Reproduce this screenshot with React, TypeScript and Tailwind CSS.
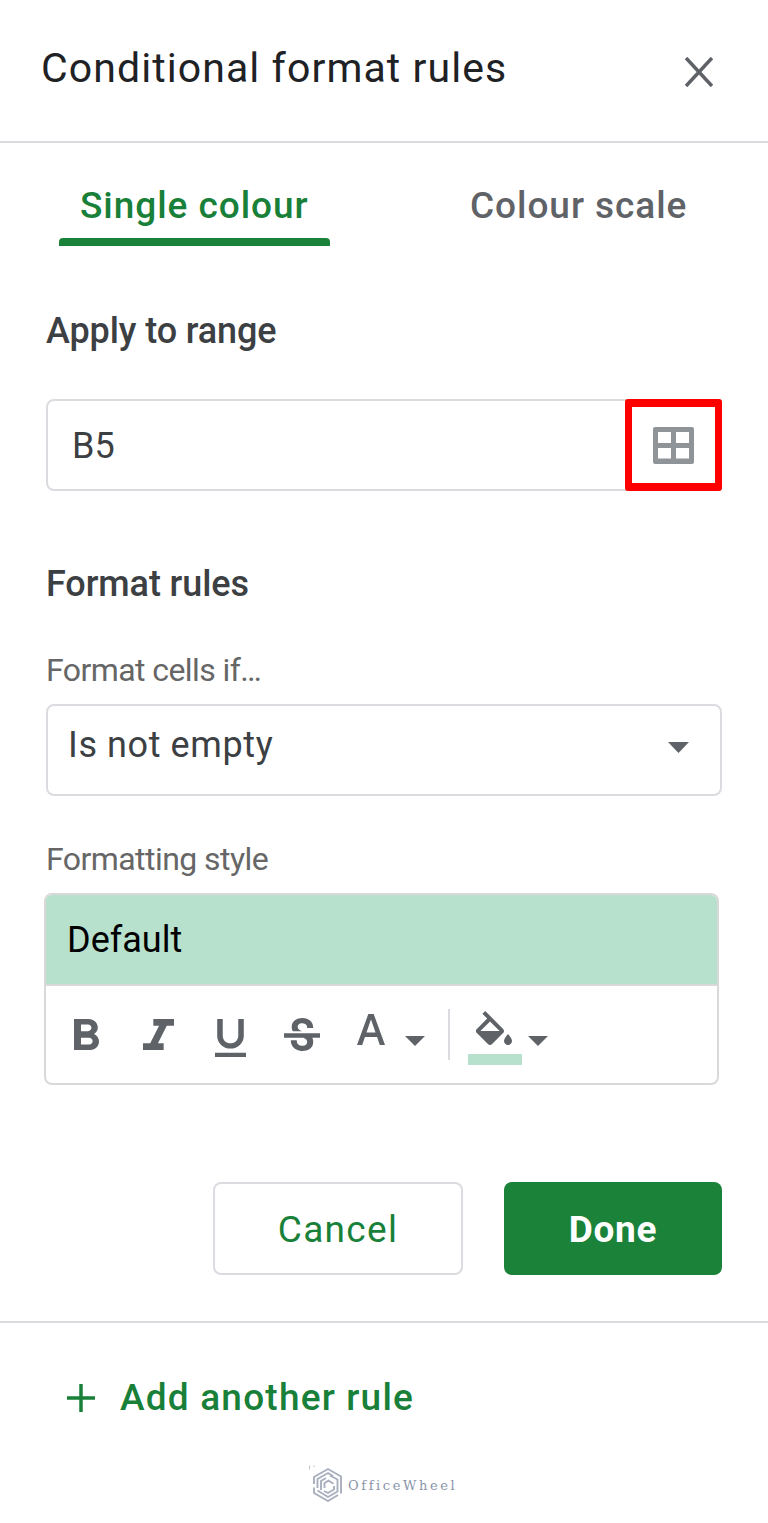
import {
  MdFormatBold,
  MdFormatColorFill,
  MdFormatColorText,
  MdFormatItalic,
  MdFormatUnderlined,
  MdStrikethroughS,
} from "react-icons/md";

const Caret = ({ className = "" }: { className?: string }) => (
  <svg
    viewBox="0 0 20 10"
    preserveAspectRatio="none"
    className={`shrink-0 fill-[#5f6368] ${className}`}
  >
    <path d="M0 0h20L10 10z" />
  </svg>
);

const GridIcon = () => (
  <svg viewBox="0 0 41 37" className="w-[41px] h-[37px]">
    <path
      fill="#8f9499"
      fillRule="evenodd"
      d="M2 0h37a2 2 0 0 1 2 2v33a2 2 0 0 1-2 2H2a2 2 0 0 1-2-2V2a2 2 0 0 1 2-2zM5 5v11h13V5zM23 5v11h13V5zM5 21v10.500h13V21zM23 21v10.500h13V21z"
    />
  </svg>
);

const WheelLogo = () => (
  <svg
    viewBox="-4 -3 34 37"
    className="w-[34px] h-[37px] fill-none stroke-[#a9afbe]"
    strokeWidth="1.900"
  >
    <path d="M-3.500-2.500v4M1-2.500v1.500" strokeWidth="1.200" opacity="0.700" />
    <path d="M1 16V9L15 1l13 7.500v17" />
    <path d="M4.500 20v-9L15 5l5 3" />
    <path d="M1 19.500V25l14 8 10-6" />
    <path d="M4.500 22.500L15 29l9.500-5.500V11.500L17 7.500" />
    <path d="M8 22v-9l5-3" />
    <path d="M11.500 20v-5l4-2.300 5 3" />
    <path d="M21 18v3.500L15 25l-4-2" />
  </svg>
);

const Header = () => (
  <header className="flex justify-between h-[143px] pl-[41px] pr-[55px] border-b-2 border-[#dadce0]">
    <h1 className="mt-12 text-[41px] leading-10 tracking-[1.08px] text-[#202124]">
      Conditional format rules
    </h1>
    <svg
      viewBox="0 0 28 30"
      className="mt-[57px] w-7 h-[30px] stroke-[#5f6368]"
      strokeWidth="3.600"
    >
      <path d="M1 1l26 28M27 1L1 29" />
    </svg>
  </header>
);

const Tabs = () => (
  <nav className="flex pl-[59px] text-[37px] leading-10 font-medium tracking-[0.95px]">
    <div className="flex flex-col w-[271px] h-[103px] pt-[43px] text-[#188038]">
      <span className="pl-[21px] whitespace-nowrap">Single colour</span>
      <div className="mt-auto h-2 rounded-t bg-[#1a8239]" />
    </div>
    <span className="pt-[43px] pl-[140px] text-[#5f6368]">Colour scale</span>
  </nav>
);

const RangeField = () => (
  <div className="flex justify-between mt-[48px] h-[92px] border-2 border-[#dadce0] rounded-lg">
    <span className="mt-[25px] pl-6 text-4xl leading-10 text-[#3c4043]">
      B5
    </span>
    {/* highlighted picker button */}
    <div className="flex items-center justify-center -m-0.5 w-[97px] border-x-[7px] border-y-[8px] border-[#ff0000] rounded-[3px]">
      <GridIcon />
    </div>
  </div>
);

const ConditionSelect = () => (
  <div className="flex justify-between mt-3.5 h-[92px] pl-5 pr-[31px] border-2 border-[#dadce0] rounded-lg">
    <span className="mt-[19px] text-4xl leading-10 tracking-[0.6px] text-[#3c4043]">
      Is not empty
    </span>
    <Caret className="mt-[36px] w-[21px] h-[11px]" />
  </div>
);

const Toolbar = () => (
  <div className="flex items-start h-[98px] pl-7 text-[#5f6368]">
    <MdFormatBold
      viewBox="7 4 10.750 14"
      preserveAspectRatio="none"
      className="mt-[33px] w-[25px] h-[31px]"
    />
    <MdFormatItalic
      viewBox="6 4 12 14"
      preserveAspectRatio="none"
      className="mt-[33px] ml-[44px] w-[31px] h-[31px]"
    />
    <MdFormatUnderlined
      viewBox="5 3 14 18"
      preserveAspectRatio="none"
      className="mt-[33px] ml-[41px] w-[31px] h-[38px]"
    />
    <MdStrikethroughS
      viewBox="3 3 18 15.500"
      preserveAspectRatio="none"
      className="mt-[32px] ml-[38px] w-9 h-[34px]"
    />
    <MdFormatColorText
      viewBox="5.490 3 13.020 14"
      preserveAspectRatio="none"
      className="mt-[28px] ml-[37px] w-7 h-[31px]"
    />
    <Caret className="mt-[50px] ml-[20px] w-5 h-[10px]" />
    <div className="mt-[23px] ml-[23px] w-0.5 h-[51px] bg-[#dadce0]" />
    <div className="flex flex-col items-center mt-[25px] ml-[18px] w-[54px]">
      <MdFormatColorFill
        viewBox="3 0 18 17"
        preserveAspectRatio="none"
        className="-ml-0.5 w-9 h-[34px]"
      />
      <div className="mt-[9px] w-full h-[11px] bg-[#b7e1cd]" />
    </div>
    <Caret className="mt-[50px] ml-1.5 w-5 h-[10px]" />
  </div>
);

const StylePreview = () => (
  <div className="mt-3.5 -ml-0.5 w-[675px] h-[192px] border-2 border-[#d9d9d9] rounded-lg overflow-hidden">
    <div className="h-[91px] pt-[25px] pl-[21px] bg-[#b7e1cd] border-b-2 border-[#d9d9d9] text-4xl leading-10 text-black">
      Default
    </div>
    <Toolbar />
  </div>
);

const App = () => {
  return (
    <div className="w-[768px] h-[1523px] overflow-hidden bg-white font-[Roboto,sans-serif]">
      <Header />
      <Tabs />

      <main className="px-[46px] pt-[65px]">
        <h2 className="text-4xl leading-10 font-medium tracking-[-0.1px] text-[#3c4043]">
          Apply to range
        </h2>
        <RangeField />

        <h2 className="mt-[73px] text-4xl leading-10 font-medium tracking-[-0.1px] text-[#3c4043]">
          Format rules
        </h2>
        <p className="mt-[46px] text-[32px] leading-10 tracking-[-0.58px] text-[#666666]">
          Format cells if…
        </p>
        <ConditionSelect />

        <p className="mt-[43px] text-[32px] leading-10 tracking-[-0.56px] text-[#666666]">
          Formatting style
        </p>
        <StylePreview />

        <div className="flex justify-end gap-[41px] mt-[97px] h-[93px] text-[37px] leading-10">
          <button className="w-[250px] pt-0.5 border-2 border-[#dadce0] rounded-lg text-[#188038] tracking-[1.3px]">
            Cancel
          </button>
          <button className="w-[218px] pt-0.5 rounded-lg bg-[#1a8239] font-bold text-white tracking-[0.7px]">
            Done
          </button>
        </div>
      </main>

      <footer className="mt-[46px] border-t-2 border-[#dadce0]">
        <div className="flex items-center pt-[55px] pl-[67px] text-[#188038]">
          <svg
            viewBox="0 0 28 28"
            className="w-7 h-7 stroke-current"
            strokeWidth="3.500"
          >
            <path d="M14 0v28M0 14h28" />
          </svg>
          <span className="ml-[25px] text-[37px] leading-10 font-medium tracking-[1.2px]">
            Add another rule
          </span>
        </div>
        <div className="flex items-end mt-[47px] pl-[309px]">
          <WheelLogo />
          <span className="mb-2 ml-[5px] font-['DejaVu_Serif',serif] text-[13px] leading-4 tracking-[2.6px] text-[#8a94aa]">
            OfficeWheel
          </span>
        </div>
      </footer>
    </div>
  );
};

export default App;
